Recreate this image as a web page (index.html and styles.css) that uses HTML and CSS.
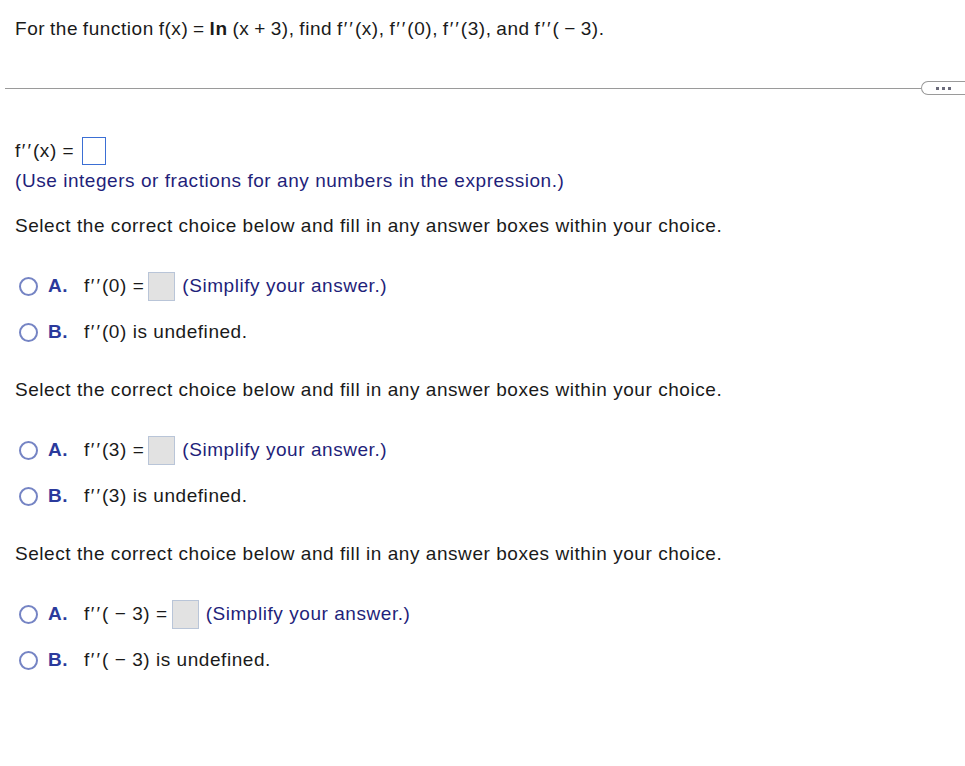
FILE: index.html
```html
<!DOCTYPE html>
<html>
<head>
<meta charset="utf-8">
<link rel="stylesheet" href="styles.css">
</head>
<body>
<div class="page">
  <div class="question">For the function f(x) = <b>ln</b> (x + 3), find f<span class="pr">′′</span>(x), f<span class="pr">′′</span>(0), f<span class="pr">′′</span>(3), and f<span class="pr">′′</span>( − 3).</div>
  <div class="divider">
    <div class="rule"></div>
    <div class="more"><span></span><span></span><span></span></div>
  </div>
  <div class="answer">
    <div class="expr"><span>f<span class="pr">′′</span>(x) =</span> <span class="box"></span></div>
    <div class="hint">(Use integers or fractions for any numbers in the expression.)</div>
  </div>

  <div class="part">
    <div class="prompt">Select the correct choice below and fill in any answer boxes within your choice.</div>
    <div class="choice">
      <span class="radio"></span><span class="letter">A.</span>
      <span class="ctext"><span>f<span class="pr">′′</span>(0) =</span> <span class="gbox"></span> <span class="hint">(Simplify your answer.)</span></span>
    </div>
    <div class="choice">
      <span class="radio"></span><span class="letter">B.</span>
      <span class="ctext"><span>f<span class="pr">′′</span>(0) is undefined.</span></span>
    </div>
  </div>

  <div class="part">
    <div class="prompt">Select the correct choice below and fill in any answer boxes within your choice.</div>
    <div class="choice">
      <span class="radio"></span><span class="letter">A.</span>
      <span class="ctext"><span>f<span class="pr">′′</span>(3) =</span> <span class="gbox"></span> <span class="hint">(Simplify your answer.)</span></span>
    </div>
    <div class="choice">
      <span class="radio"></span><span class="letter">B.</span>
      <span class="ctext"><span>f<span class="pr">′′</span>(3) is undefined.</span></span>
    </div>
  </div>

  <div class="part">
    <div class="prompt">Select the correct choice below and fill in any answer boxes within your choice.</div>
    <div class="choice">
      <span class="radio"></span><span class="letter">A.</span>
      <span class="ctext"><span>f<span class="pr">′′</span>( − 3) =</span> <span class="gbox"></span> <span class="hint">(Simplify your answer.)</span></span>
    </div>
    <div class="choice">
      <span class="radio"></span><span class="letter">B.</span>
      <span class="ctext"><span>f<span class="pr">′′</span>( − 3) is undefined.</span></span>
    </div>
  </div>
</div>
</body>
</html>
```

FILE: styles.css
```css
html, body {
  margin: 0;
  padding: 0;
  background: #ffffff;
}
body {
  font-family: "Liberation Sans", Arial, sans-serif;
  font-size: 19px;
  letter-spacing: 0.55px;
  color: #1a1a1a;
}
.page {
  padding: 17px 0 0 15px;
}
.pr {
  letter-spacing: 2px;
  padding-left: 1px;
}
.question {
  line-height: 24px;
  word-spacing: -1px;
}
.divider {
  display: flex;
  align-items: center;
  margin: 39px 0 0 -10px;
  height: 16px;
}
.rule {
  flex: 1;
  height: 1px;
  background: #9a9a9a;
}
.more {
  width: 44px;
  height: 14px;
  border: 1px solid #9a9a9a;
  border-right: none;
  border-radius: 8px 0 0 8px;
  display: flex;
  align-items: center;
  justify-content: center;
  gap: 3px;
  box-sizing: border-box;
}
.more span {
  width: 3px;
  height: 3px;
  background: #6a6a7a;
}
.answer {
  margin-top: 40px;
}
.expr {
  display: flex;
  align-items: center;
  height: 30px;
  gap: 8px;
}
.box {
  display: inline-block;
  width: 22px;
  height: 26px;
  border: 1.5px solid #3b6fd4;
}
.hint {
  color: #1f1f7a;
}
.answer .hint {
  margin-top: 3px;
  line-height: 24px;
}
.part {
  margin-top: 21px;
}
.part + .part {
  margin-top: 31px;
}
.prompt {
  line-height: 24px;
  margin-bottom: 33px;
}
.choice {
  display: flex;
  align-items: center;
  height: 30px;
  margin-bottom: 16px;
  padding-left: 4px;
}
.radio {
  width: 15px;
  height: 15px;
  border: 2px solid #7584c4;
  border-radius: 50%;
  margin-right: 10px;
  flex: none;
}
.letter {
  font-weight: bold;
  color: #2b3a9c;
  width: 36px;
}
.ctext {
  display: flex;
  align-items: center;
  gap: 4px;
}
.gbox {
  display: inline-block;
  width: 25px;
  height: 27px;
  background: #e2e2e2;
  border: 1px solid #b9c5d8;
  margin-right: 3px;
}
```
